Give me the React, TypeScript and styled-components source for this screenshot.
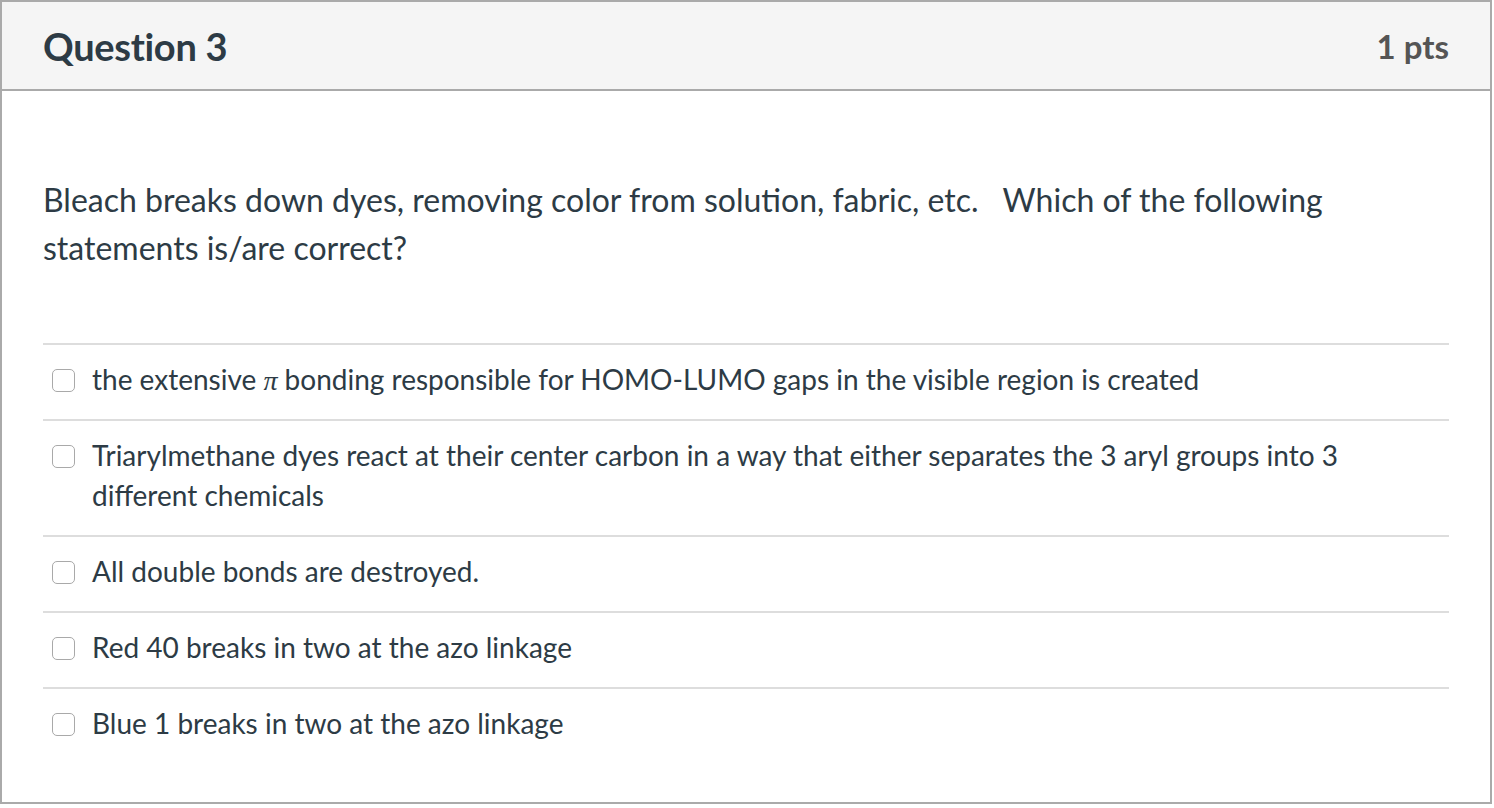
import React from "react";
import styled, { createGlobalStyle } from "styled-components";

const GlobalStyle = createGlobalStyle`
  html, body {
    margin: 0;
    padding: 0;
    background: #ffffff;
  }
  body {
    font-family: Lato, "Open Sans", sans-serif;
    color: #2d3b45;
  }
`;

const Card = styled.div`
  width: 1492px;
  height: 804px;
  box-sizing: border-box;
  border: 2px solid #aaaaaa;
  display: flex;
  flex-direction: column;
`;

const Header = styled.div`
  height: 89px;
  box-sizing: border-box;
  background: #f5f5f5;
  border-bottom: 2px solid #aaaaaa;
  display: flex;
  align-items: center;
  justify-content: space-between;
  padding: 0 41px 0 41px;
`;

const Title = styled.h2`
  margin: 0;
  font-size: 38px;
  font-weight: 700;
  color: #2d3b45;
  letter-spacing: -0.3px;
`;

const Points = styled.div`
  font-size: 33px;
  font-weight: 700;
  color: #555555;
`;

const Body = styled.div`
  padding: 85px 41px 0 41px;
`;

const Prompt = styled.p`
  margin: 0;
  font-size: 32px;
  line-height: 48px;
  max-width: 1300px;
`;

const Answers = styled.div`
  margin-top: 71px;
  display: flex;
  flex-direction: column;
`;

const Answer = styled.label`
  display: flex;
  align-items: flex-start;
  gap: 17px;
  padding: 14px 0 20px 9px;
  border-top: 2px solid #dddddd;
  font-size: 28px;
  line-height: 40px;
`;

const Box = styled.span`
  flex: none;
  width: 21px;
  height: 21px;
  margin-top: 10px;
  border: 1.5px solid #a9a9a9;
  border-radius: 5px;
  background: #fff;
`;

const AnswerText = styled.span`
  max-width: 1280px;
`;

const Pi = styled.i`
  font-family: "Liberation Serif", "DejaVu Serif", serif;
  font-size: 28px;
  line-height: 0;
`;

const answers: React.ReactNode[] = [
  <>
    the extensive <Pi>π</Pi> bonding responsible for HOMO-LUMO gaps in the visible region is created
  </>,
  <>
    Triarylmethane dyes react at their center carbon in a way that either separates the 3 aryl groups into 3
    different chemicals
  </>,
  <>All double bonds are destroyed.</>,
  <>Red 40 breaks in two at the azo linkage</>,
  <>Blue 1 breaks in two at the azo linkage</>,
];

export default function App() {
  return (
    <>
      <GlobalStyle />
      <Card>
        <Header>
          <Title>Question 3</Title>
          <Points>1 pts</Points>
        </Header>
        <Body>
          <Prompt>
            Bleach breaks down dyes, removing color from solution, fabric, etc.&nbsp;&nbsp; Which of the following
            statements is/are correct?
          </Prompt>
          <Answers>
            {answers.map((a, i) => (
              <Answer key={i}>
                <Box />
                <AnswerText>{a}</AnswerText>
              </Answer>
            ))}
          </Answers>
        </Body>
      </Card>
    </>
  );
}
